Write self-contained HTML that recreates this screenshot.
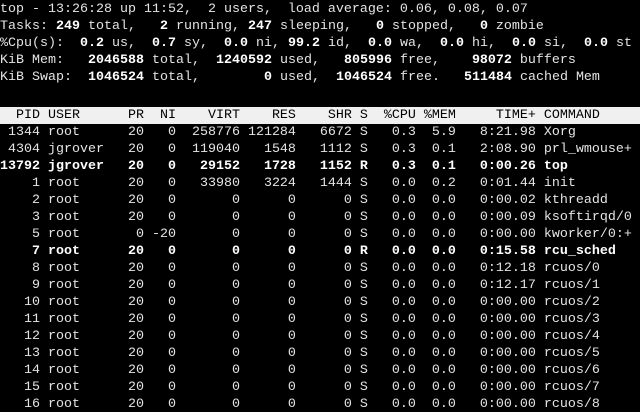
<!DOCTYPE html>
<html><head><meta charset="utf-8"><style>
html,body{margin:0;padding:0;background:#000;width:640px;height:412px;overflow:hidden}
pre{margin:0;padding:1px 0 0 0;font-family:"Liberation Mono",monospace;font-size:13.33px;line-height:17px;color:#e4e4e4;white-space:pre}
b{color:#fff;font-weight:bold}
.h{background:#f0f0f0;color:#000;display:block;width:640px;margin-top:4px}
</style></head><body><pre>top - 13:26:28 up 11:52,  2 users,  load average: 0.06, 0.08, 0.07
Tasks: <b>249</b> total,   <b>2</b> running, <b>247</b> sleeping,   <b>0</b> stopped,   <b>0</b> zombie
%Cpu(s):  <b>0.2</b> us,  <b>0.7</b> sy,  <b>0.0</b> ni, <b>99.2</b> id,  <b>0.0</b> wa,  <b>0.0</b> hi,  <b>0.0</b> si,  <b>0.0</b> st
KiB Mem:   <b>2046588</b> total,  <b>1240592</b> used,   <b>805996</b> free,    <b>98072</b> buffers
KiB Swap:  <b>1046524</b> total,        <b>0</b> used,  <b>1046524</b> free.   <b>511484</b> cached Mem

<span class="h">  PID USER      PR  NI    VIRT    RES    SHR S  %CPU %MEM     TIME+ COMMAND</span> 1344 root      20   0  258776 121284   6672 S   0.3  5.9   8:21.98 Xorg
 4304 jgrover   20   0  119040   1548   1112 S   0.3  0.1   2:08.90 prl_wmouse+
<b>13792 jgrover   20   0   29152   1728   1152 R   0.3  0.1   0:00.26 top</b>
    1 root      20   0   33980   3224   1444 S   0.0  0.2   0:01.44 init
    2 root      20   0       0      0      0 S   0.0  0.0   0:00.02 kthreadd
    3 root      20   0       0      0      0 S   0.0  0.0   0:00.09 ksoftirqd/0
    5 root       0 -20       0      0      0 S   0.0  0.0   0:00.00 kworker/0:+
<b>    7 root      20   0       0      0      0 R   0.0  0.0   0:15.58 rcu_sched</b>
    8 root      20   0       0      0      0 S   0.0  0.0   0:12.18 rcuos/0
    9 root      20   0       0      0      0 S   0.0  0.0   0:12.17 rcuos/1
   10 root      20   0       0      0      0 S   0.0  0.0   0:00.00 rcuos/2
   11 root      20   0       0      0      0 S   0.0  0.0   0:00.00 rcuos/3
   12 root      20   0       0      0      0 S   0.0  0.0   0:00.00 rcuos/4
   13 root      20   0       0      0      0 S   0.0  0.0   0:00.00 rcuos/5
   14 root      20   0       0      0      0 S   0.0  0.0   0:00.00 rcuos/6
   15 root      20   0       0      0      0 S   0.0  0.0   0:00.00 rcuos/7
   16 root      20   0       0      0      0 S   0.0  0.0   0:00.00 rcuos/8
</pre></body></html>
